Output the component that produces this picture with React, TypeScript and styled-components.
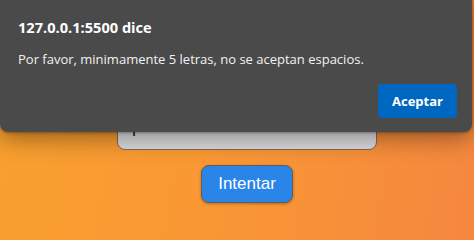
import styled, { createGlobalStyle } from 'styled-components';

const GlobalStyle = createGlobalStyle`
  html, body {
    margin: 0;
    padding: 0;
    width: 100%;
    height: 100%;
    overflow: hidden;
  }
  body {
    font-family: 'Liberation Sans', Arial, sans-serif;
  }
`;

export default function App() {
  return (
    <>
      <GlobalStyle />
      <Page>
        <Form>
          <WordInput defaultValue='q' />
          <TryButton>Intentar</TryButton>
        </Form>
        <Dialog role='alertdialog'>
          <DialogTitle>127.0.0.1:5500 dice</DialogTitle>
          <DialogMessage>Por favor, minimamente 5 letras, no se aceptan espacios.</DialogMessage>
          <DialogActions>
            <AcceptButton>Aceptar</AcceptButton>
          </DialogActions>
        </Dialog>
      </Page>
    </>
  );
}

const Page = styled.main`
  position: relative;
  width: 100%;
  height: 100vh;
  min-height: 212px;
  background: linear-gradient(100deg, #f8a02e 0%, #f99834 45%, #f5873f 100%);
  display: flex;
  justify-content: center;
  padding-left: 20px;
  box-sizing: border-box;
`;

const Form = styled.div`
  display: flex;
  flex-direction: column;
  align-items: center;
  gap: 15px;
  padding-top: 110px;
`;

const WordInput = styled.input`
  width: 260px;
  height: 40px;
  box-sizing: border-box;
  border: 1px solid #8a6a4a;
  border-radius: 8px;
  background: linear-gradient(180deg, #ededef 0%, #dadadd 100%);
  font-family: 'Liberation Sans', Arial, sans-serif;
  font-size: 18px;
  padding: 0 8px 8px;
  color: #222;
  outline: none;
`;

const TryButton = styled.button`
  width: 92px;
  height: 38px;
  border: 1px solid #6a5a50;
  border-radius: 8px;
  background: #2a85e8;
  color: #fff;
  font-family: 'Liberation Sans', Arial, sans-serif;
  font-size: 17px;
  box-shadow: 0 1px 3px rgba(0, 0, 0, 0.3);
  cursor: pointer;
`;

const Dialog = styled.section`
  position: absolute;
  top: -10px;
  left: 0;
  width: 472px;
  height: 142px;
  box-sizing: border-box;
  padding: 27px 15px 0 18px;
  background: #4a4a4a;
  border-radius: 8px;
  box-shadow: 0 6px 24px rgba(0, 0, 0, 0.4), 0 1px 3px rgba(0, 0, 0, 0.3);
  font-family: 'Open Sans', 'Noto Sans', sans-serif;
  color: #fff;
`;

const DialogTitle = styled.h2`
  margin: 0;
  font-size: 14.6px;
  font-weight: 700;
  line-height: 20px;
`;

const DialogMessage = styled.p`
  margin: 13px 0 0;
  font-size: 13px;
  line-height: 18px;
  color: #f2f2f2;
`;

const DialogActions = styled.div`
  display: flex;
  justify-content: flex-end;
  margin-top: 16px;
`;

const AcceptButton = styled.button`
  width: 79px;
  height: 34px;
  border: none;
  border-radius: 4px;
  background: #0067c0;
  color: #fff;
  font-family: 'Open Sans', 'Noto Sans', sans-serif;
  font-size: 13px;
  font-weight: 700;
  cursor: pointer;
`;
